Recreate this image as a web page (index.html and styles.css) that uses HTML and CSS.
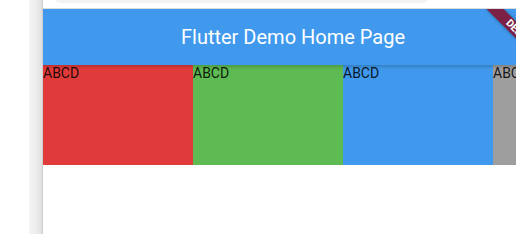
FILE: index.html
```
<!DOCTYPE html>
<html lang="en">
<head>
    <meta charset="UTF-8">
    <meta name="viewport" content="width=device-width, initial-scale=1.0">
    <title>Flutter Demo</title>
    <link rel="stylesheet" href="styles.css">
</head>
<body>
    <div class="page">
        <div class="gutter"></div>
        <div class="rail"></div>
        <div class="frame">
            <div class="topbar"><div class="pill"></div></div>
            <div class="app">
                <header class="appbar">
                    <h1>Flutter Demo Home Page</h1>
                </header>
                <div class="boxes">
                    <div class="box red">ABCD</div>
                    <div class="box green">ABCD</div>
                    <div class="box blue">ABCD</div>
                    <div class="box grey">ABCD</div>
                </div>
                <div class="banner">DEBUG</div>
            </div>
        </div>
    </div>
</body>
</html>
```

FILE: styles.css
```
* {
    margin: 0;
    padding: 0;
    box-sizing: border-box;
    font-family: Roboto, "Liberation Sans", sans-serif;
}

body {
    background-color: white;
    overflow: hidden;
}

.page {
    display: flex;
    width: 516px;
    height: 234px;
    overflow: hidden;
}

.gutter {
    width: 29px;
    flex-shrink: 0;
}

.rail {
    width: 14px;
    flex-shrink: 0;
    background: linear-gradient(to right, #f4f4f4 0%, #efefef 45%, #e6e6e6 80%, #dedede 100%);
    border-right: 1px solid #cdcdcd;
}

.frame {
    width: 500px;
    flex-shrink: 0;
    display: flex;
    flex-direction: column;
}

.topbar {
    height: 9px;
    border-bottom: 1px solid #dcdcdc;
    position: relative;
}

.pill {
    position: absolute;
    left: 10px;
    right: 113px;
    top: -10px;
    height: 13px;
    border-radius: 0 0 8px 8px;
    background-color: #f3f3f5;
}

.app {
    position: relative;
    overflow: hidden;
    flex: 1;
}

.appbar {
    height: 56px;
    background-color: #4099ec;
    display: flex;
    justify-content: center;
    align-items: center;
    position: relative;
    z-index: 1;
    box-shadow: 0 2px 3px rgba(0,0,0,0.18);
}

.appbar h1 {
    font-size: 20px;
    font-weight: 400;
    color: white;
}

.boxes {
    display: flex;
}

.box {
    width: 150px;
    height: 100px;
    flex-shrink: 0;
    font-size: 14px;
    color: rgba(0,0,0,0.87);
}

.red {
    background-color: #e03b3a;
}

.green {
    background-color: #5eba52;
}

.blue {
    background-color: #4099ec;
}

.grey {
    background-color: #9e9e9e;
}

.banner {
    position: absolute;
    left: 436px;
    top: 18px;
    width: 80px;
    height: 12px;
    background-color: #7c2145;
    color: white;
    font-size: 10.2px;
    font-weight: 700;
    line-height: 12px;
    text-align: center;
    transform: rotate(45deg);
    box-shadow: 0 0 4px rgba(0,0,0,0.35);
    z-index: 2;
}
```
